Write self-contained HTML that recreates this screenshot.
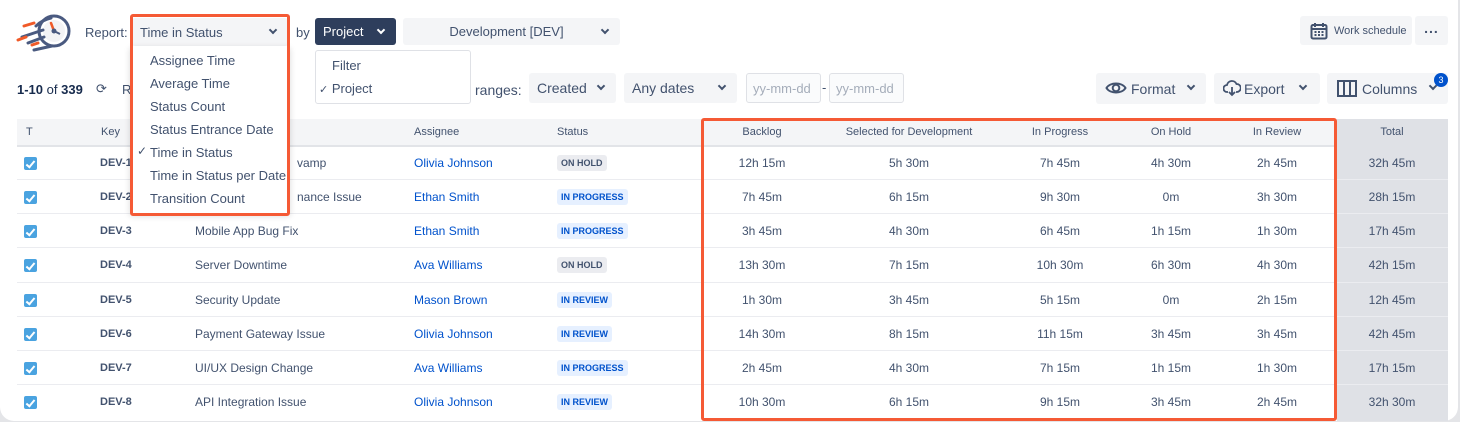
<!DOCTYPE html>
<html><head><meta charset="utf-8"><style>
*{box-sizing:border-box;margin:0;padding:0}
body{width:1460px;height:422px;background:#e4e5e8;font-family:"Liberation Sans",sans-serif;color:#42526e;position:relative;overflow:hidden}
.card{position:absolute;left:0;top:-20px;width:1458px;height:441px;background:#fff;border-radius:14px}
.a{position:absolute;white-space:nowrap}
.btn{position:absolute;background:#f4f5f7;border-radius:3px;font-size:13px;color:#42526e;display:flex;align-items:center}
.chev{display:inline-block;width:6px;height:6px;border-right:2px solid #42526e;border-bottom:2px solid #42526e;transform:rotate(45deg);position:absolute}
.th{position:absolute;top:119px;height:28px;background:#f4f5f7;border-bottom:2px solid #e2e4e8}
.hd{position:absolute;top:126px;font-size:11px;color:#42526e}
.cell{position:absolute;font-size:12px;color:#42526e}
.cb{position:absolute;left:24px;width:13px;height:13px;background:#4aa3e0;border-radius:2px}
.cb:after{content:"";position:absolute;left:4px;top:1.5px;width:3px;height:7px;border-right:2px solid #fff;border-bottom:2px solid #fff;transform:rotate(40deg)}
.lz{position:absolute;font-size:9px;font-weight:bold;padding:3px 4px;border-radius:3px}
.oh{background:#ebecf0;color:#42526e}.ip{background:#e6f0ff;color:#0052cc}
.ln{position:absolute;left:17px;width:1431px;height:1px;background:#ebecf0}
.c{text-align:center;width:120px;margin-left:-60px}
.top{z-index:10}
</style></head><body>
<div class="card"></div>
<svg class="a" style="left:14px;top:10px" width="60" height="42" viewBox="0 0 60 42">
<circle cx="40" cy="21" r="15" fill="none" stroke="#4a5a80" stroke-width="3"/>
<circle cx="40" cy="21" r="11" fill="#f3f3f5"/>
<path d="M37 8 Q28 10 22 16" stroke="#4a5a80" stroke-width="3" fill="none" stroke-linecap="round"/>
<path d="M38 36 L20 40" stroke="#4a5a80" stroke-width="3" stroke-linecap="round"/>
<path d="M29 20 L8 27" stroke="#4a5a80" stroke-width="3" stroke-linecap="round"/>
<path d="M30 27 L14 33" stroke="#4a5a80" stroke-width="3" stroke-linecap="round"/>
<path d="M10 16 L20 13" stroke="#f05a28" stroke-width="3" stroke-linecap="round"/>
<path d="M4 30 L12 27" stroke="#f05a28" stroke-width="3" stroke-linecap="round"/>
<path d="M18 35 L24 33" stroke="#f05a28" stroke-width="3" stroke-linecap="round"/>
<path d="M40 21 L37 13" stroke="#f05a28" stroke-width="2.5" stroke-linecap="round"/>
<path d="M40 21 L46 24" stroke="#4a5a80" stroke-width="2"/>
<circle cx="40" cy="21" r="2.5" fill="#4a5a80"/>
</svg>
<div class="a" style="left:85px;top:25px;font-size:13px">Report:</div>
<div class="a" style="left:296px;top:25px;font-size:13px">by</div>
<div class="btn" style="left:315px;top:18px;width:81px;height:27px;background:#2e3e5c;color:#fff;padding-left:8px">Project<span class="chev" style="right:12px;top:9px;border-color:#fff"></span></div>
<div class="btn" style="left:403px;top:18px;width:217px;height:27px;justify-content:center;padding-right:10px">Development [DEV]<span class="chev" style="right:12px;top:9px"></span></div>
<div class="a" style="left:315px;top:50px;width:156px;height:54px;border:1px solid #dfe1e6;border-radius:3px;background:#fff"></div>
<div class="a" style="left:332px;top:58px;font-size:13px">Filter</div>
<div class="a" style="left:319px;top:81px;font-size:13px"><span style="font-size:11px">✓</span> Project</div>
<div class="btn" style="left:1300px;top:16px;width:112px;height:29px;font-size:11px;padding-left:34px">Work schedule</div>
<svg class="a" style="left:1310px;top:22px" width="18" height="18" viewBox="0 0 18 18"><rect x="1.5" y="3" width="15" height="13.5" rx="1.5" fill="none" stroke="#42526e" stroke-width="2"/><path d="M1.5 7h15M5 1v4M13 1v4" stroke="#42526e" stroke-width="2"/><g fill="#42526e"><rect x="4.5" y="9" width="2" height="2"/><rect x="8" y="9" width="2" height="2"/><rect x="11.5" y="9" width="2" height="2"/><rect x="4.5" y="12" width="2" height="2"/><rect x="8" y="12" width="2" height="2"/><rect x="11.5" y="12" width="2" height="2"/></g></svg>
<div class="btn" style="left:1415px;top:16px;width:33px;height:29px;justify-content:center;font-weight:bold;letter-spacing:1px;font-size:14px;padding-bottom:6px">...</div>

<div class="a" style="left:17px;top:82px;font-size:13px;color:#172b4d"><b>1-10</b> of <b>339</b></div>
<div class="a" style="left:96px;top:81px;font-size:13px">⟳</div>
<div class="a" style="left:122px;top:82px;font-size:13px">R</div>
<div class="a" style="left:475px;top:82px;font-size:14px">ranges:</div>
<div class="btn" style="left:529px;top:73px;width:87px;height:30px;padding-left:8px;font-size:14px">Created<span class="chev" style="right:12px;top:10px"></span></div>
<div class="btn" style="left:624px;top:73px;width:113px;height:30px;padding-left:8px;font-size:14px">Any dates<span class="chev" style="right:12px;top:10px"></span></div>
<div class="btn" style="left:746px;top:73px;width:75px;height:30px;background:#fafbfc;border:1px solid #dfe1e6;font-size:13px;color:#a5adba;padding-left:6px">yy-mm-dd</div>
<div class="a" style="left:822px;top:80px;font-size:13px">-</div>
<div class="btn" style="left:829px;top:73px;width:75px;height:30px;background:#fafbfc;border:1px solid #dfe1e6;font-size:13px;color:#a5adba;padding-left:6px">yy-mm-dd</div>
<div class="btn" style="left:1096px;top:73px;width:110px;height:31px;padding-left:35px;font-size:14px">Format<span class="chev" style="right:12px;top:10px"></span></div>
<svg class="a" style="left:1105px;top:80px" width="22" height="16" viewBox="0 0 22 16"><path d="M1.5 8C5 2 17 2 20.5 8 17 14 5 14 1.5 8z" fill="none" stroke="#42526e" stroke-width="2"/><circle cx="11" cy="8" r="3.3" fill="none" stroke="#42526e" stroke-width="2"/></svg>
<div class="btn" style="left:1214px;top:73px;width:106px;height:31px;padding-left:30px;font-size:14px">Export<span class="chev" style="right:14px;top:10px"></span></div>
<svg class="a" style="left:1223px;top:79px" width="18" height="18" viewBox="0 0 18 18"><path d="M5 13H4a3.5 3.5 0 0 1 0-7 5 5 0 0 1 9.5-1A3.8 3.8 0 0 1 14 13h-1" fill="none" stroke="#42526e" stroke-width="1.8"/><path d="M9 8v8M6 13l3 3 3-3" fill="none" stroke="#42526e" stroke-width="1.8"/></svg>
<div class="btn" style="left:1327px;top:73px;width:121px;height:31px;padding-left:35px;font-size:14px">Columns<span class="chev" style="right:12px;top:10px"></span></div>
<svg class="a" style="left:1337px;top:80px" width="20" height="17" viewBox="0 0 20 17"><rect x="1" y="1" width="18" height="15" fill="none" stroke="#42526e" stroke-width="2"/><path d="M7 1v15M13 1v15" stroke="#42526e" stroke-width="2"/></svg>
<div class="a" style="left:1434px;top:73px;width:14px;height:14px;border-radius:7px;background:#0052cc;color:#fff;font-size:9px;text-align:center;line-height:14px">3</div>

<div class="th" style="left:17px;width:1320px"></div>
<div class="a" style="left:1337px;top:119px;width:111px;height:302px;background:#dfe1e6"></div>
<div class="hd" style="left:26px">T</div>
<div class="hd" style="left:101px">Key</div>
<div class="hd" style="left:414px">Assignee</div>
<div class="hd" style="left:557px">Status</div>
<div class="hd c" style="left:762px;width:200px;margin-left:-100px">Backlog</div>
<div class="hd c" style="left:909px;width:200px;margin-left:-100px">Selected for Development</div>
<div class="hd c" style="left:1060px">In Progress</div>
<div class="hd c" style="left:1171px">On Hold</div>
<div class="hd c" style="left:1277px">In Review</div>
<div class="hd c" style="left:1392px">Total</div>

<div id="rows"></div>
<script>
var d=[["DEV-1","Website Revamp","Olivia Johnson","ON HOLD","12h 15m","5h 30m","7h 45m","4h 30m","2h 45m","32h 45m"],
["DEV-2","Performance Issue","Ethan Smith","IN PROGRESS","7h 45m","6h 15m","9h 30m","0m","3h 30m","28h 15m"],
["DEV-3","Mobile App Bug Fix","Ethan Smith","IN PROGRESS","3h 45m","4h 30m","6h 45m","1h 15m","1h 30m","17h 45m"],
["DEV-4","Server Downtime","Ava Williams","ON HOLD","13h 30m","7h 15m","10h 30m","6h 30m","4h 30m","42h 15m"],
["DEV-5","Security Update","Mason Brown","IN REVIEW","1h 30m","3h 45m","5h 15m","0m","2h 15m","12h 45m"],
["DEV-6","Payment Gateway Issue","Olivia Johnson","IN REVIEW","14h 30m","8h 15m","11h 15m","3h 45m","3h 45m","42h 45m"],
["DEV-7","UI/UX Design Change","Ava Williams","IN PROGRESS","2h 45m","4h 30m","7h 15m","1h 15m","1h 30m","17h 15m"],
["DEV-8","API Integration Issue","Olivia Johnson","IN REVIEW","10h 30m","6h 15m","9h 15m","3h 45m","2h 45m","32h 30m"]];
var ys=[163,197,231,265,300,334,368,402],h="",cx=[762,909,1060,1171,1277,1392];
d.forEach(function(r,i){var y=ys[i];
if(i>0)h+='<div class="ln" style="top:'+(y-18)+'px'+'"></div>';
h+='<div class="cb" style="top:'+(y-6)+'px"></div>';
h+='<div class="cell" style="left:100px;top:'+(y-6)+'px;font-size:11px;font-weight:bold">'+r[0]+'</div>';
if(i>1)h+='<div class="cell" style="left:195px;top:'+(y-7)+'px">'+r[1]+'</div>';
h+='<div class="cell" style="left:414px;top:'+(y-7)+'px;color:#0052cc">'+r[2]+'</div>';
h+='<div class="lz '+(r[3]=="ON HOLD"?"oh":"ip")+'" style="left:557px;top:'+(y-8)+'px">'+r[3]+'</div>';
for(var j=0;j<6;j++)h+='<div class="cell c" style="left:'+cx[j]+'px;top:'+(y-7)+'px">'+r[4+j]+'</div>';});
h+='<div class="cell" style="left:297px;top:156px">vamp</div><div class="cell" style="left:297px;top:190px">nance Issue</div>';
document.getElementById('rows').innerHTML=h;
</script>
<div class="a" style="left:701px;top:118px;width:636px;height:303px;border:3px solid #f55a35;border-radius:3px"></div>

<div class="btn top" style="left:132px;top:18px;width:156px;height:28px;padding-left:8px">Time in Status<span class="chev" style="right:12px;top:9px"></span></div>
<div class="a top" style="left:130px;top:46px;width:160px;height:168px;background:#fff;box-shadow:0 2px 6px rgba(0,0,0,.15)"></div>
<div class="a top" style="left:150px;top:49px;font-size:13px;line-height:23px">Assignee Time<br>Average Time<br>Status Count<br>Status Entrance Date<br>Time in Status<br>Time in Status per Date<br>Transition Count</div>
<div class="a top" style="left:137px;top:144px;font-size:12px">✓</div>
<div class="a top" style="left:130px;top:14px;width:160px;height:202px;border:3px solid #f55a35;border-radius:3px"></div>
</body></html>
